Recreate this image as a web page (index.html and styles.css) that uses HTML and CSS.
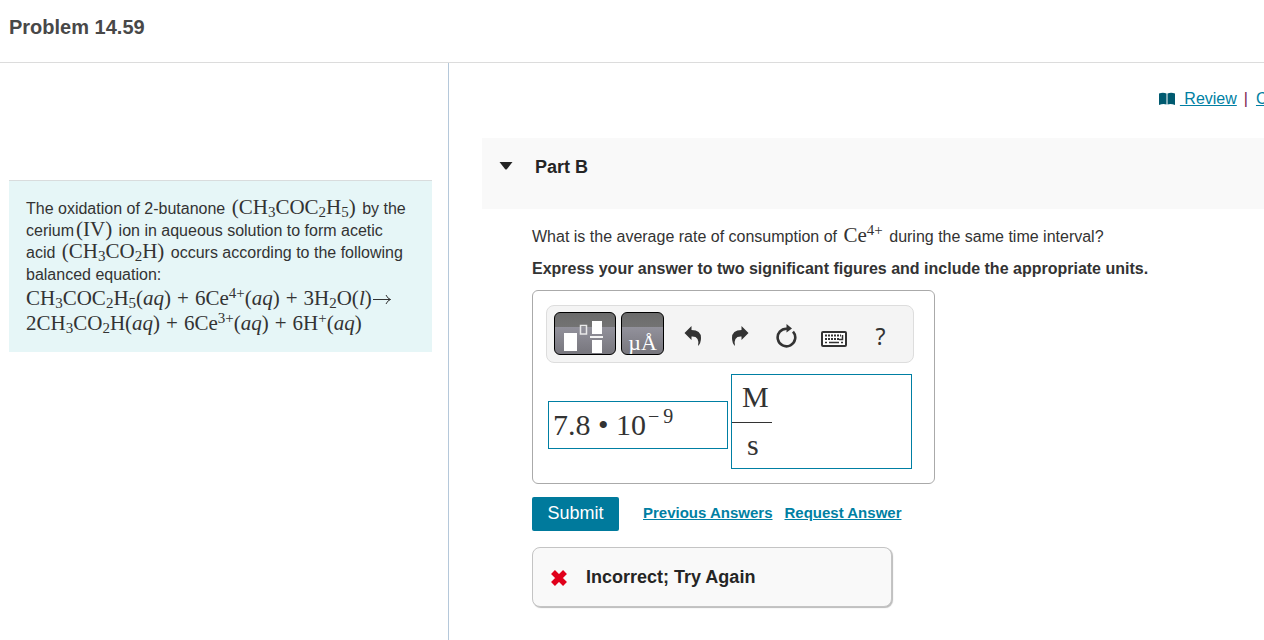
FILE: index.html
```html
<!DOCTYPE html>
<html lang="en">
<head>
  <meta charset="UTF-8">
  <meta name="viewport" content="width=device-width, initial-scale=1.0">
  <title>Problem 14.59</title>
  <link rel="stylesheet" href="styles.css">
</head>
<body>
  <header class="page-header">
    <h1>Problem 14.59</h1>
  </header>

  <div class="columns">
    <aside class="intro">
      <div class="intro-box">
        <p>The oxidation of 2-butanone <span class="math">(CH<sub>3</sub>COC<sub>2</sub>H<sub>5</sub>)</span> by the cerium<span class="math">(IV)</span> ion in aqueous solution to form acetic acid <span class="math">(CH<sub>3</sub>CO<sub>2</sub>H)</span> occurs according to the following balanced equation:</p>
        <p class="equation">
          <span class="math">CH<sub>3</sub>COC<sub>2</sub>H<sub>5</sub>(<i>aq</i>)<span class="op">+</span>6Ce<sup>4+</sup>(<i>aq</i>)<span class="op">+</span>3H<sub>2</sub>O(<i>l</i>)<svg class="arrow" width="20" height="12" viewBox="0 0 20 12" aria-label="yields"><path d="M1 6.500H18.500M14 2Q15.500 5.500 18.500 6.500Q15.500 7.500 14 11" fill="none" stroke="currentColor"/></svg></span>
          <span class="math">2CH<sub>3</sub>CO<sub>2</sub>H(<i>aq</i>)<span class="op">+</span>6Ce<sup>3+</sup>(<i>aq</i>)<span class="op">+</span>6H<sup>+</sup>(<i>aq</i>)</span>
        </p>
      </div>
    </aside>

    <main class="work">
      <nav class="resources">
        <svg width="16" height="14" viewBox="0 0 16 14" aria-hidden="true">
          <path d="M0 1.500Q4 0 7.500 1.500V12.500Q4 11.500 0 13ZM8.500 1.500Q12 0 16 1.500V13Q12 11.500 8.500 12.500Z" fill="#005a70"/>
        </svg>
        <a href="#">&nbsp;Review</a>
        <span class="divider">|</span>
        <a href="#">Constants</a>
      </nav>

      <section class="part">
        <div class="part-header">
          <svg width="14" height="8" viewBox="0 0 14 8" aria-hidden="true"><path d="M0.500 0H13.500L8 7Q7 8 6 7Z" fill="#252525"/></svg>
          <h2>Part B</h2>
        </div>

        <div class="part-body">
          <p class="question">What is the average rate of consumption of <span class="math">Ce<sup>4+</sup></span> during the same time interval?</p>
          <p class="directions">Express your answer to two significant figures and include the appropriate units.</p>

          <div class="answer">
            <div class="toolbar">
              <button class="palette wide" type="button" aria-label="Templates">
                <svg width="60" height="41" viewBox="0 0 60 41">
                  <path d="M9 20H22V38H9Z" fill="#fff"/>
                  <path d="M25.500 12.500H31.500V21H25.500Z" fill="none" stroke="#e8e8e8" stroke-width="1.500"/>
                  <path d="M37 8H47V21H37ZM37 27H47V40H37Z" fill="#fff"/>
                  <path d="M35 24H48" stroke="#f4f4f4" stroke-width="2"/>
                </svg>
              </button>
              <button class="palette" type="button" aria-label="Units">µÅ</button>
              <button class="tool" type="button" aria-label="Undo">
                <svg width="20" height="20" viewBox="0 0 20 20"><path d="M1.500 7L8.500 0V4Q18 4 18 12Q18 17 15 20Q17 10 8.500 10.500V14Z" fill="#333"/></svg>
              </button>
              <button class="tool" type="button" aria-label="Redo">
                <svg width="20" height="20" viewBox="0 0 20 20"><path d="M18.500 7L11.500 0V4Q2 4 2 12Q2 17 5 20Q3 10 11.500 10.500V14Z" fill="#333"/></svg>
              </button>
              <button class="tool" type="button" aria-label="Reset">
                <svg width="22" height="26" viewBox="0 0 22 26"><path d="M17 8.600A8.800 8.800 0 1 1 11 5.700" fill="none" stroke="#333" stroke-width="2.600"/><path d="M10.500 1L16 5.500L10.500 9.500Z" fill="#333"/></svg>
              </button>
              <button class="tool keyboard" type="button" aria-label="Keyboard shortcuts">
                <svg width="26" height="16" viewBox="0 0 26 16">
                  <rect x="1" y="1" width="24" height="14" rx="1" fill="#fff" stroke="#333" stroke-width="2"/>
                  <path d="M4 4.500H20M4 8H18" stroke="#333" stroke-width="2" stroke-dasharray="2 1"/>
                  <path d="M21.500 4V8.500H18M4 11.500H6M8 11.500H18M20 11.500H22" fill="none" stroke="#333" stroke-width="1.500"/>
                </svg>
              </button>
              <button class="tool help" type="button" aria-label="Help">?</button>
            </div>

            <div class="fields">
              <div class="field value" role="textbox" contenteditable="true" aria-label="Value">7.8 • 10<sup><span class="sign">−</span>9</sup></div>
              <div class="field units" role="textbox" contenteditable="true" aria-label="Units">
                <span class="numerator">M</span>
                <span class="denominator">s</span>
              </div>
            </div>
          </div>

          <div class="actions">
            <button class="submit" type="button">Submit</button>
            <a href="#">Previous Answers</a>
            <a href="#">Request Answer</a>
          </div>

          <div class="feedback">
            <svg width="18" height="18" viewBox="0 0 18 18" aria-hidden="true"><path d="M3 3L15 15M15 3L3 15" stroke="#e0001b" stroke-width="5.500"/></svg>
            <strong>Incorrect; Try Again</strong>
          </div>
        </div>
      </section>
    </main>
  </div>
</body>
</html>
```

FILE: styles.css
```css
* {
  margin: 0;
  padding: 0;
  box-sizing: border-box;
}

body {
  background: #fff;
  color: #333;
  font-family: "Liberation Sans", Arial, sans-serif;
  font-size: 16px;
  min-height: 100vh;
  display: flex;
  flex-direction: column;
}

a {
  color: #007fa3;
}

.page-header {
  padding: 15px 9px 23px;
  border-bottom: 1px solid #dcdcdc;
}

.page-header h1 {
  color: #484848;
  font-size: 20px;
  line-height: 24px;
}

.columns {
  flex: 1;
  display: grid;
  grid-template-columns: 449px minmax(0, 1fr);
}

/* left column */
.intro {
  padding: 117px 16px 16px 9px;
  border-right: 1px solid #b5c8da;
}

.intro-box {
  padding: 17px 22px 16px 17px;
  background: #e6f6f7;
  border-top: 1px solid #d9dcdd;
  line-height: 22px;
}

.math {
  margin: 0 2px;
  font-family: "Liberation Serif", "Times New Roman", serif;
  font-size: 21px;
  line-height: 0;
  white-space: nowrap;
}

.math sub,
.math sup {
  font-size: 15px;
  line-height: 0;
}

.math sub {
  vertical-align: -3px;
}

.math sup {
  vertical-align: 7px;
}

.op {
  margin: 0 6px;
}

.equation .math {
  display: block;
  margin: 0;
  line-height: 25px;
}

/* right column */
.work {
  overflow: hidden;
  padding: 24px 0 24px 33px;
}

.resources {
  display: flex;
  justify-content: flex-end;
  align-items: center;
  margin-right: -64px;
  line-height: 24px;
}

.resources a {
  margin-left: 5px;
}

.divider {
  margin: 0 3px 0 7px;
  color: #7b2150;
}

.part {
  margin-top: 27px;
}

.part-header {
  display: flex;
  gap: 22px;
  padding: 17px 17px 30px;
  background: #f9f9f9;
}

.part-header svg {
  margin-top: 7px;
}

.part-header h2 {
  color: #252525;
  font-size: 18px;
  line-height: 24px;
}

.part-body {
  padding: 16px 16px 0 50px;
}

.question,
.directions {
  line-height: 24px;
}

.directions {
  margin-top: 8px;
  font-weight: bold;
}

.answer {
  width: 403px;
  max-width: 100%;
  margin-top: 9px;
  padding: 14px 13px;
  border: 1px solid #aaa;
  border-radius: 6px;
}

.toolbar {
  display: flex;
  align-items: flex-start;
  width: 368px;
  height: 58px;
  padding: 6px 7px;
  background: #f4f4f4;
  border: 1px solid #ddd;
  border-radius: 8px;
}

.palette {
  width: 43px;
  height: 43px;
  margin-right: 5px;
  overflow: hidden;
  background: linear-gradient(#6b6b6b, #737373 34%, #92919b 35%, #77767d);
  border: 1px solid #000;
  border-radius: 6px;
  color: #fff;
  font-family: "Liberation Serif", serif;
  font-size: 22px;
  line-height: 59px;
}

.palette.wide {
  width: 62px;
}

.palette svg {
  display: block;
}

.tool {
  display: flex;
  justify-content: center;
  align-items: center;
  width: 47px;
  height: 43px;
  padding-top: 4px;
  background: none;
  border: 0;
  color: #333;
}

.tool.keyboard {
  padding-top: 10px;
}

.help {
  font-family: "Noto Sans", sans-serif;
  font-size: 23px;
}

.fields {
  display: flex;
  align-items: center;
  gap: 3px;
  margin-top: 11px;
  padding-left: 2px;
}

.field {
  border: 1px solid #007fa3;
  font-family: "Liberation Serif", "Times New Roman", serif;
  font-size: 30px;
}

.value {
  width: 180px;
  height: 48px;
  margin-top: 7px;
  padding-left: 4px;
  line-height: 46px;
  white-space: nowrap;
}

.value sup {
  font-size: 20px;
  line-height: 0;
  vertical-align: 12px;
}

.sign {
  margin: 0 4px 0 2px;
}

.units {
  width: 181px;
  height: 95px;
}

.units span {
  display: block;
  width: 40px;
  padding-left: 10px;
  line-height: 44px;
}

.units .numerator {
  padding-bottom: 3px;
  border-bottom: 1px solid #333;
}

.units .denominator {
  padding-left: 15px;
}

.actions {
  display: flex;
  align-items: center;
  margin-top: 13px;
}

.submit {
  width: 87px;
  height: 34px;
  margin-right: 24px;
  padding-bottom: 2px;
  background: #007a9c;
  border: 0;
  border-radius: 2px;
  color: #fff;
  font-family: inherit;
  font-size: 18px;
}

.actions a {
  margin-right: 12px;
  padding-bottom: 3px;
  font-size: 15px;
  font-weight: bold;
}

.feedback {
  display: flex;
  align-items: center;
  gap: 18px;
  width: 360px;
  max-width: 100%;
  height: 60px;
  margin-top: 16px;
  padding: 1px 17px 0;
  background: #f9f9f9;
  border: 1px solid #c4c4c4;
  border-radius: 8px;
  box-shadow: 1px 1px 1px #bbb;
  color: #252525;
  font-size: 18px;
}
```
